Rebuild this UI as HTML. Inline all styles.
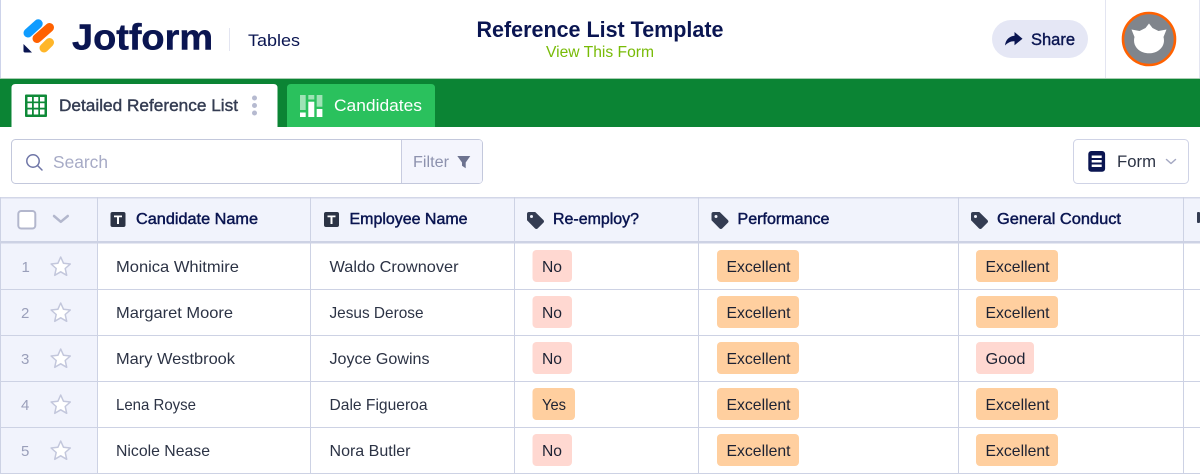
<!DOCTYPE html>
<html><head><meta charset="utf-8"><style>
html,body{margin:0;padding:0;background:#fff;width:1200px;height:474px;overflow:hidden}
svg{display:block}
text{font-family:"Liberation Sans",sans-serif;font-size:16px;fill:#2c3345}
.h{font-size:15.5px;fill:#0a1551;stroke:#0a1551;stroke-width:.45px}
.n{fill:#9a9fba;font-size:15px}
.b{fill:#1d2233;font-size:16px}
</style></head><body>
<svg width="1200" height="474" viewBox="0 0 1200 474" xmlns="http://www.w3.org/2000/svg">
<defs>
<path id="star" d="M0-9.5 2.8-3.2 9.6-2.5 4.5 2 6 8.8 0 5.3-6 8.8-4.5 2-9.6-2.5-2.8-3.2Z" fill="#fff" stroke="#c3c7dc" stroke-width="1.5" stroke-linejoin="round"/>
<path id="tag" d="M2 .5H8L16 8.3Q17 9.4 16 10.4L10.400 16Q9.400 17 8.300 16L.5 8V2Q.5 .5 2 .5Z" fill="#343c52" stroke="#343c52" stroke-linejoin="round"/>
</defs>
<rect width="1200" height="474" fill="#fff"/>
<!-- header -->
<rect x="0" y="0" width="1" height="79" fill="#cdd3ea"/>
<rect x="1199" y="0" width="1" height="79" fill="#e3e5f1"/>
<line x1="28" y1="33" x2="38.200" y2="23.800" stroke="#0f9cff" stroke-width="9" stroke-linecap="round"/>
<line x1="37" y1="38.500" x2="49.500" y2="27.500" stroke="#ff6100" stroke-width="9" stroke-linecap="round"/>
<line x1="44" y1="48" x2="49.500" y2="42.500" stroke="#ffb629" stroke-width="9" stroke-linecap="round"/>
<path d="M23.500 44 32 52.500H25Q23.500 52.500 23.500 51Z" fill="#0a1551"/>
<text x="72" y="49.500" textLength="141" lengthAdjust="spacingAndGlyphs" style="font-size:36px;font-weight:700;fill:#0a1551;stroke:#0a1551;stroke-width:.5px">Jotform</text>
<rect x="229" y="28" width="1" height="23" fill="#e3e5f1"/>
<text x="248" y="46" textLength="52" lengthAdjust="spacingAndGlyphs" style="font-size:17px;fill:#0a1551">Tables</text>
<text x="476.500" y="37" textLength="247" lengthAdjust="spacingAndGlyphs" style="font-size:22px;font-weight:700;fill:#0a1551">Reference List Template</text>
<text x="546" y="57" textLength="108" lengthAdjust="spacingAndGlyphs" style="font-size:15.500px;fill:#78bb07">View This Form</text>
<rect x="992" y="20" width="96" height="38" rx="19" fill="#e5e7f5"/>
<path d="M1005 45.500C1005.500 39.500 1010 36 1014.500 35.800V32L1022.500 38.800 1014.500 45.200V41.300C1011 41 1008 42.500 1005 45.500Z" fill="#0a1551"/>
<text x="1031" y="45" textLength="44" lengthAdjust="spacingAndGlyphs" style="font-size:17px;fill:#0a1551;stroke:#0a1551;stroke-width:.4px">Share</text>
<rect x="1105" y="0" width="1" height="79" fill="#e3e5f1"/>
<circle cx="1149" cy="39" r="26" fill="#80858c" stroke="#ff6100" stroke-width="2.600"/>
<path d="M1131.500 29.500 1139.500 31 1145.500 28 1149 23.500 1152.500 28 1158.500 31 1166.500 29.500 1163.500 37C1166 46 1158.500 53.300 1149 53.300 1139.500 53.300 1132 46 1134.500 37Z" fill="#fff"/>
<!-- green band -->
<rect x="0" y="78" width="1200" height="1" fill="#a9cdb3"/>
<rect x="0" y="79" width="1200" height="48" fill="#0b8434"/>
<path d="M11.500 127V88Q11.500 84 15.500 84H273.500Q277.500 84 277.500 88V127Z" fill="#fff"/>
<rect x="25" y="94.500" width="22" height="22.500" rx="1" fill="#0f8a38"/>
<g fill="#fff">
<rect x="27.500" y="97" width="4.500" height="4.500"/><rect x="33.800" y="97" width="4.500" height="4.500"/><rect x="40" y="97" width="4.500" height="4.500"/>
<rect x="27.500" y="103.200" width="4.500" height="4.500"/><rect x="33.800" y="103.200" width="4.500" height="4.500"/><rect x="40" y="103.200" width="4.500" height="4.500"/>
<rect x="27.500" y="109.500" width="4.500" height="5"/><rect x="33.800" y="109.500" width="4.500" height="5"/><rect x="40" y="109.500" width="4.500" height="5"/>
</g>
<text x="59" y="111" textLength="179" lengthAdjust="spacingAndGlyphs" style="font-size:16.500px;fill:#343c52;stroke:#343c52;stroke-width:.4px">Detailed Reference List</text>
<g fill="#b6bad0"><circle cx="254.500" cy="98" r="2.500"/><circle cx="254.500" cy="105.500" r="2.500"/><circle cx="254.500" cy="113" r="2.500"/></g>
<path d="M287 127V88Q287 84 291 84H431Q435 84 435 88V127Z" fill="#2ac15d"/>
<g fill="#fff">
<rect x="300" y="95" width="5.700" height="15" opacity=".55"/><rect x="300" y="112.500" width="5.700" height="4.500"/>
<rect x="308.300" y="95" width="6" height="4.500" opacity=".55"/><rect x="308.300" y="101.700" width="6" height="15.300"/>
<rect x="316.700" y="95" width="5.700" height="11.700" opacity=".55"/><rect x="316.700" y="109" width="5.700" height="8"/>
</g>
<text x="334" y="111" textLength="88" lengthAdjust="spacingAndGlyphs" style="font-size:16.500px;fill:#fff">Candidates</text>
<!-- toolbar -->
<rect x="11.500" y="139.500" width="471" height="44" rx="4" fill="#fff" stroke="#c3c8dc"/>
<path d="M402 140H479Q482 140 482 143V180Q482 183 479 183H402Z" fill="#f4f5fd"/>
<rect x="401" y="140" width="1" height="43" fill="#c8cce0"/>
<circle cx="33" cy="161" r="6.200" fill="none" stroke="#6f76a7" stroke-width="1.500"/>
<path d="M37.500 165.500 42 170" stroke="#6f76a7" stroke-width="1.500" stroke-linecap="round"/>
<text x="53" y="168" textLength="55" lengthAdjust="spacingAndGlyphs" style="font-size:17.500px;fill:#a7abc6">Search</text>
<text x="413" y="167" textLength="36" lengthAdjust="spacingAndGlyphs" style="font-size:15.500px;fill:#8d92ae">Filter</text>
<path d="M457.300 156H470.300L465.700 162.500V168.300L462 165.800V162.500Z" fill="#6d7390"/>
<rect x="1073.500" y="139.500" width="115" height="44" rx="4" fill="#fff" stroke="#cfd3e6"/>
<rect x="1088.300" y="151" width="16.800" height="20.700" rx="3" fill="#0a1551"/>
<g fill="#fff"><rect x="1091.700" y="155.500" width="10" height="2.500"/><rect x="1091.700" y="160" width="10" height="2.500"/><rect x="1091.700" y="164.500" width="10" height="2.500"/></g>
<text x="1117" y="167" textLength="39" lengthAdjust="spacingAndGlyphs" style="font-size:17px;fill:#2c3345">Form</text>
<path d="M1166.500 159.500 1171 163.500 1175.500 159.500" fill="none" stroke="#a4a8c2" stroke-width="1.500" stroke-linecap="round" stroke-linejoin="round"/>
<!-- table -->
<rect x="0" y="197" width="1200" height="46" fill="#f1f3fc"/>
<rect x="0" y="243" width="97" height="231" fill="#f1f3fc"/>
<rect x="0" y="197" width="1200" height="1.500" fill="#d3d7e8"/>
<rect x="0" y="241" width="1200" height="2.500" fill="#cdd2e4"/>
<g fill="#cdd2e4">
<rect x="0" y="289" width="1200" height="1"/><rect x="0" y="335" width="1200" height="1"/><rect x="0" y="381" width="1200" height="1"/><rect x="0" y="427" width="1200" height="1"/><rect x="0" y="473" width="1200" height="1"/>
<rect x="97" y="197" width="1" height="277"/><rect x="310" y="197" width="1" height="277"/><rect x="514" y="197" width="1" height="277"/><rect x="698" y="197" width="1" height="277"/><rect x="958" y="197" width="1" height="277"/><rect x="1183" y="197" width="1" height="277"/>
<rect x="0" y="197" width="1" height="277"/>
</g>
<rect x="18.300" y="211" width="17" height="17.500" rx="3" fill="#fff" stroke="#b3b7cd" stroke-width="2"/>
<path d="M54 216 60.800 221.800 67.800 216" fill="none" stroke="#b3b7cd" stroke-width="2.500" stroke-linecap="round" stroke-linejoin="round"/>
<!-- header cells -->
<g>
<rect x="110.500" y="212" width="15" height="15" rx="2" fill="#2c3345"/><path d="M114 215.500H122V217.200H119V224H117V217.200H114Z" fill="#fff"/>
<rect x="324" y="212" width="15" height="15" rx="2" fill="#2c3345"/><path d="M327.500 215.500H335.500V217.200H332.500V224H330.500V217.200H327.500Z" fill="#fff"/>
<use href="#tag" x="527" y="212"/><circle cx="531.500" cy="216.500" r="1.500" fill="#f1f3fc"/>
<use href="#tag" x="711.500" y="212"/><circle cx="716" cy="216.500" r="1.500" fill="#f1f3fc"/>
<use href="#tag" x="971" y="212"/><circle cx="975.500" cy="216.500" r="1.500" fill="#f1f3fc"/>
<rect x="1197" y="212" width="3" height="11" rx="1" fill="#343c52"/>
</g>
<text class="h" x="136" y="224" textLength="122" lengthAdjust="spacingAndGlyphs">Candidate Name</text>
<text class="h" x="349.500" y="224" textLength="118" lengthAdjust="spacingAndGlyphs">Employee Name</text>
<text class="h" x="553" y="224" textLength="86" lengthAdjust="spacingAndGlyphs">Re-employ?</text>
<text class="h" x="737.500" y="224" textLength="92" lengthAdjust="spacingAndGlyphs">Performance</text>
<text class="h" x="997" y="224" textLength="124" lengthAdjust="spacingAndGlyphs">General Conduct</text>
<!-- row numbers and stars -->
<text class="n" x="21.500" y="272">1</text><use href="#star" x="60.700" y="266.500"/>
<text class="n" x="21" y="318">2</text><use href="#star" x="60.700" y="312.500"/>
<text class="n" x="21" y="364">3</text><use href="#star" x="60.700" y="358.500"/>
<text class="n" x="21" y="410">4</text><use href="#star" x="60.700" y="404.500"/>
<text class="n" x="21" y="456">5</text><use href="#star" x="60.700" y="450.500"/>
<!-- names -->
<text x="116" y="272" textLength="123" lengthAdjust="spacingAndGlyphs">Monica Whitmire</text><text x="329.500" y="272" textLength="129" lengthAdjust="spacingAndGlyphs">Waldo Crownover</text>
<text x="116" y="318" textLength="117" lengthAdjust="spacingAndGlyphs">Margaret Moore</text><text x="329.500" y="318" textLength="94" lengthAdjust="spacingAndGlyphs">Jesus Derose</text>
<text x="116" y="364" textLength="119" lengthAdjust="spacingAndGlyphs">Mary Westbrook</text><text x="329.500" y="364" textLength="100" lengthAdjust="spacingAndGlyphs">Joyce Gowins</text>
<text x="116" y="410" textLength="80" lengthAdjust="spacingAndGlyphs">Lena Royse</text><text x="329.500" y="410" textLength="98" lengthAdjust="spacingAndGlyphs">Dale Figueroa</text>
<text x="116" y="456" textLength="94" lengthAdjust="spacingAndGlyphs">Nicole Nease</text><text x="329.500" y="456" textLength="81" lengthAdjust="spacingAndGlyphs">Nora Butler</text>
<!-- badges -->
<g fill="#ffd8d1">
<rect x="532.500" y="250" width="39.500" height="32" rx="4"/><rect x="532.500" y="296" width="39.500" height="32" rx="4"/><rect x="532.500" y="342" width="39.500" height="32" rx="4"/><rect x="532.500" y="434" width="39.500" height="32" rx="4"/>
<rect x="976" y="342" width="58" height="32" rx="4"/>
</g>
<g fill="#ffcf9f">
<rect x="532.500" y="388" width="42.500" height="32" rx="4"/>
<rect x="717" y="250" width="82" height="32" rx="4"/><rect x="717" y="296" width="82" height="32" rx="4"/><rect x="717" y="342" width="82" height="32" rx="4"/><rect x="717" y="388" width="82" height="32" rx="4"/><rect x="717" y="434" width="82" height="32" rx="4"/>
<rect x="976" y="250" width="82" height="32" rx="4"/><rect x="976" y="296" width="82" height="32" rx="4"/><rect x="976" y="388" width="82" height="32" rx="4"/><rect x="976" y="434" width="82" height="32" rx="4"/>
</g>
<text class="b" x="542" y="272" textLength="20" lengthAdjust="spacingAndGlyphs">No</text><text class="b" x="542" y="318" textLength="20" lengthAdjust="spacingAndGlyphs">No</text><text class="b" x="542" y="364" textLength="20" lengthAdjust="spacingAndGlyphs">No</text><text class="b" x="542" y="410" textLength="24" lengthAdjust="spacingAndGlyphs">Yes</text><text class="b" x="542" y="456" textLength="20" lengthAdjust="spacingAndGlyphs">No</text>
<text class="b" x="726.500" y="272" textLength="64" lengthAdjust="spacingAndGlyphs">Excellent</text><text class="b" x="726.500" y="318" textLength="64" lengthAdjust="spacingAndGlyphs">Excellent</text><text class="b" x="726.500" y="364" textLength="64" lengthAdjust="spacingAndGlyphs">Excellent</text><text class="b" x="726.500" y="410" textLength="64" lengthAdjust="spacingAndGlyphs">Excellent</text><text class="b" x="726.500" y="456" textLength="64" lengthAdjust="spacingAndGlyphs">Excellent</text>
<text class="b" x="985.500" y="272" textLength="64" lengthAdjust="spacingAndGlyphs">Excellent</text><text class="b" x="985.500" y="318" textLength="64" lengthAdjust="spacingAndGlyphs">Excellent</text><text class="b" x="985.500" y="364" textLength="40" lengthAdjust="spacingAndGlyphs">Good</text><text class="b" x="985.500" y="410" textLength="64" lengthAdjust="spacingAndGlyphs">Excellent</text><text class="b" x="985.500" y="456" textLength="64" lengthAdjust="spacingAndGlyphs">Excellent</text>
</svg>
</body></html>
